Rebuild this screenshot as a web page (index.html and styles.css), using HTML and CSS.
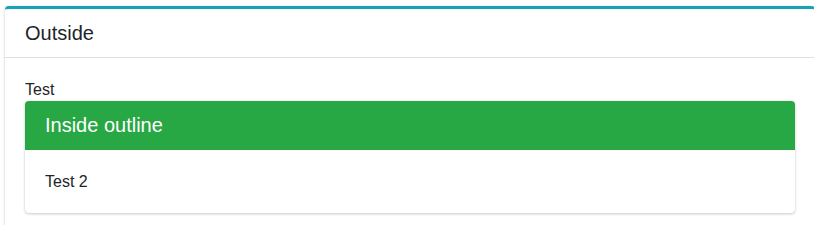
FILE: index.html
```html
<!DOCTYPE html>
<html lang="en">
<head>
  <meta charset="UTF-8">
  <meta name="viewport" content="width=device-width, initial-scale=1.0">
  <title>Cards</title>
  <link rel="stylesheet" href="styles.css">
</head>
<body>
  <div class="card card-outline">
    <div class="card-header">
      <h3 class="card-title">Outside</h3>
    </div>
    <div class="card-body">
      <div class="card-text">Test</div>
      <!-- Inner card -->
      <div class="card card-success">
        <div class="card-header">
          <h3 class="card-title">Inside outline</h3>
        </div>
        <div class="card-body">
          <div class="card-text">Test 2</div>
        </div>
      </div>
    </div>
  </div>
</body>
</html>
```

FILE: styles.css
```css
body {
  margin: 0;
  padding: 6px 0 0 5px;
  font-family: "Liberation Sans", Arial, sans-serif;
  font-size: 16px;
  color: #212529;
  background: #fff;
  overflow: hidden;
}

.card {
  background: #fff;
  border-radius: 4px;
  box-shadow: 0 0 1px rgba(0, 0, 0, .125), 0 1px 3px rgba(0, 0, 0, .2);
}

/* Outer card runs past the right edge */
.card-outline {
  width: 810px;
  border-top: 3px solid #17a2b8;
}

.card-header {
  padding: 12px 20px;
  border-bottom: 1px solid rgba(0, 0, 0, .125);
}

.card-title {
  margin: 0;
  font-size: 20px;
  font-weight: normal;
  line-height: 24px;
}

.card-body {
  padding: 20px;
}

.card-text {
  line-height: 23px;
}

.card-success .card-header {
  background: #28a745;
  color: #fff;
  border-bottom: 1px solid #28a745;
  border-radius: 4px 4px 0 0;
}
```
